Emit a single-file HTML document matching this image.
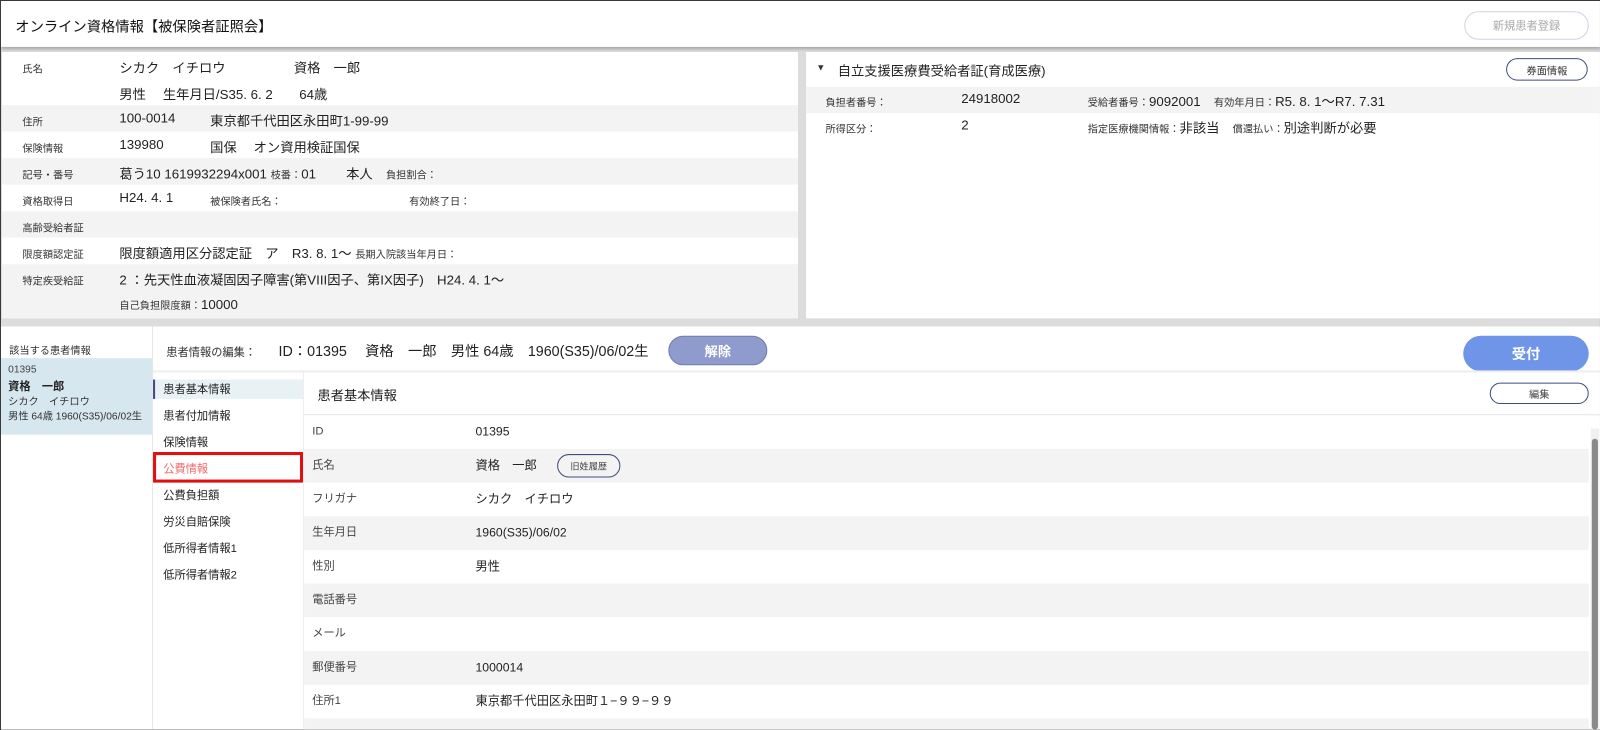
<!DOCTYPE html>
<html><head><meta charset="utf-8"><style>
*{box-sizing:border-box;margin:0;padding:0}
body{width:1600px;height:730px;overflow:hidden;background:#3a3a3a;font-family:"Liberation Sans","Noto Sans CJK JP",sans-serif;color:#222;position:relative}
.frame{position:absolute;left:1px;top:1px;width:1567px;height:714px;background:#dcdcdc;overflow:hidden;transform:scale(1.0204);transform-origin:0 0}
.a{position:absolute}
.hdr{left:0;top:0;width:1567px;height:45px;background:#fff;box-shadow:0 2px 3px rgba(0,0,0,.25)}
.lbl{font-size:10px;color:#333}
.v{font-size:13px;color:#222;white-space:nowrap}
.s{font-size:10px;color:#333;white-space:nowrap}
.row{position:absolute;left:0;width:100%}
.g{background:#f3f3f3}
.w{background:#fff}
.btn{position:absolute;border-radius:16px;font-size:11px;display:flex;align-items:center;justify-content:center}
</style></head><body>
<div class="frame">
 <div class="a hdr">
  <div class="a" style="left:14px;top:15px;font-size:14px;color:#111">オンライン資格情報【被保険者証照会】</div>
  <div class="btn" style="left:1434px;top:10px;width:122px;height:28px;border:1px solid #cfd3e4;color:#aaa">新規患者登録</div>
 </div>
 <div class="a" style="left:1px;top:50px;width:780px;height:261px;background:#fff">
  <div class="row w" style="top:0;height:52px"></div>
  <div class="row g" style="top:52px;height:26px"></div>
  <div class="row w" style="top:78px;height:26px"></div>
  <div class="row g" style="top:104px;height:26px"></div>
  <div class="row w" style="top:130px;height:26px"></div>
  <div class="row g" style="top:156px;height:26px"></div>
  <div class="row w" style="top:182px;height:26px"></div>
  <div class="row g" style="top:208px;height:53px"></div>
  <div class="a lbl" style="left:20px;top:8px">氏名</div>
  <div class="a v" style="left:115px;top:5px">シカク　イチロウ</div>
  <div class="a v" style="left:286px;top:5px">資格　一郎</div>
  <div class="a v" style="left:115px;top:31px">男性　 生年月日/S35. 6. 2　　64歳</div>
  <div class="a lbl" style="left:20px;top:60px">住所</div>
  <div class="a v" style="left:115px;top:57px">100-0014</div>
  <div class="a v" style="left:204px;top:57px">東京都千代田区永田町1-99-99</div>
  <div class="a lbl" style="left:20px;top:86px">保険情報</div>
  <div class="a v" style="left:115px;top:83px">139980</div>
  <div class="a v" style="left:204px;top:83px">国保　 オン資用検証国保</div>
  <div class="a lbl" style="left:20px;top:112px">記号・番号</div>
  <div class="a v" style="left:115px;top:109px">葛う10 1619932294x001 <span class="s">枝番：</span>01　　 本人　<span class="s">負担割合：</span></div>
  <div class="a lbl" style="left:20px;top:138px">資格取得日</div>
  <div class="a v" style="left:115px;top:135px">H24. 4. 1</div>
  <div class="a s" style="left:204px;top:138px">被保険者氏名：</div>
  <div class="a s" style="left:399px;top:138px">有効終了日：</div>
  <div class="a lbl" style="left:20px;top:164px">高齢受給者証</div>
  <div class="a lbl" style="left:20px;top:190px">限度額認定証</div>
  <div class="a v" style="left:115px;top:187px">限度額適用区分認定証　ア　R3. 8. 1～ <span class="s">長期入院該当年月日：</span></div>
  <div class="a lbl" style="left:20px;top:216px">特定疾受給証</div>
  <div class="a v" style="left:115px;top:213px">2 ：先天性血液凝固因子障害(第VIII因子、第IX因子)　H24. 4. 1～</div>
  <div class="a v" style="left:115px;top:240px"><span class="s">自己負担限度額：</span>10000</div>
 </div>
 <div class="a" style="left:789px;top:50px;width:778px;height:261px;background:#fff">
  <div class="a" style="left:10px;top:10px;font-size:9px;color:#333">▼</div>
  <div class="a v" style="left:31px;top:8px">自立支援医療費受給者証(育成医療)</div>
  <div class="btn" style="left:686px;top:6px;width:80px;height:22px;border:1.5px solid #3d4c80;font-size:10px;color:#333">券面情報</div>
  <div class="row g" style="top:34px;height:26px"></div>
  <div class="a s" style="left:19px;top:41px">負担者番号：</div>
  <div class="a v" style="left:152px;top:38px">24918002</div>
  <div class="a v" style="left:276px;top:38px"><span class="s">受給者番号：</span>9092001　<span class="s">有効年月日：</span>R5. 8. 1～R7. 7.31</div>
  <div class="a s" style="left:19px;top:67px">所得区分：</div>
  <div class="a v" style="left:152px;top:64px">2</div>
  <div class="a v" style="left:276px;top:64px"><span class="s">指定医療機関情報：</span>非該当　<span class="s">償還払い：</span>別途判断が必要</div>
 </div>
 <div class="a" style="left:0;top:319px;width:1567px;height:400px;background:#fff">
  <div class="a" style="left:148px;top:0;width:1px;height:400px;background:#e6e6e6"></div>
  <div class="a s" style="left:8px;top:15px">該当する患者情報</div>
  <div class="a" style="left:0;top:31px;width:148px;height:75px;background:#d7e7ef"></div>
  <div class="a s" style="left:7px;top:37px;color:#444">01395</div>
  <div class="a" style="left:7px;top:50px;font-size:11px;font-weight:bold">資格　一郎</div>
  <div class="a s" style="left:7px;top:65px">シカク　イチロウ</div>
  <div class="a s" style="left:7px;top:79px">男性 64歳 1960(S35)/06/02生</div>
  <div class="a s" style="left:162px;top:17px;font-size:11px">患者情報の編集：</div>
  <div class="a" style="left:272px;top:14px;font-size:14px;white-space:nowrap">ID：01395　 資格　一郎　男性 64歳　1960(S35)/06/02生</div>
  <div class="btn" style="left:654px;top:9px;width:97px;height:29px;background:#8e9bcc;border:1px solid #6f7db2;color:#fff;font-weight:bold;font-size:13px">解除</div>
  <div class="btn" style="left:1433px;top:9px;width:123px;height:35px;background:#6f95e8;border-radius:18px;color:#fff;font-weight:bold;font-size:14px">受付</div>
  <div class="a" style="left:149px;top:43px;width:1418px;height:2px;background:#eee"></div>
  <div class="a" style="left:149px;top:52px;width:147px;height:19px;background:#e8f1f4;border-left:2px solid #3d4c80"></div>
  <div class="a" style="font-size:11px;left:159px;top:49px;line-height:26px">患者基本情報<br>患者付加情報<br>保険情報<br><span style="color:#f06a6a">公費情報</span><br>公費負担額<br>労災自賠保険<br>低所得者情報1<br>低所得者情報2</div>
  <div class="a" style="left:149px;top:123px;width:147px;height:30px;border:3px solid #e01010"></div>
  <div class="a" style="left:296px;top:45px;width:1px;height:355px;background:#eee"></div>
  <div class="a" style="left:310px;top:57px;font-size:13px">患者基本情報</div>
  <div class="btn" style="left:1459px;top:55px;width:97px;height:21px;border:1.5px solid #3d4c80;font-size:10px;color:#444">編集</div>
  <div class="a" style="left:297px;top:86px;width:1270px;height:1px;background:#e3e3e3"></div>
  <div class="a" style="left:297px;top:87px;width:1259px;height:313px;font-size:13px">
   <div class="row w" style="top:0;height:33px"></div>
   <div class="row g" style="top:33px;height:33px"></div>
   <div class="row w" style="top:66px;height:33px"></div>
   <div class="row g" style="top:99px;height:33px"></div>
   <div class="row w" style="top:132px;height:33px"></div>
   <div class="row g" style="top:165px;height:33px"></div>
   <div class="row w" style="top:198px;height:33px"></div>
   <div class="row g" style="top:231px;height:33px"></div>
   <div class="row w" style="top:264px;height:33px"></div>
   <div class="row g" style="top:297px;height:33px"></div>
   <div class="a" style="left:8px;top:0;font-size:11px;line-height:33px;color:#444">ID<br>氏名<br>フリガナ<br>生年月日<br>性別<br>電話番号<br>メール<br>郵便番号<br>住所1</div>
   <div class="a" style="left:168px;top:0;font-size:12px;line-height:33px">01395<br>資格　一郎<br>シカク　イチロウ<br>1960(S35)/06/02<br>男性<br><br><br>1000014<br>東京都千代田区永田町１−９９−９９</div>
   <div class="btn" style="left:248px;top:38px;width:62px;height:23px;border:1.5px solid #3d4c80;font-size:9px;color:#444">旧姓履歴</div>
  </div>
  <div class="a" style="left:1558px;top:100px;width:8px;height:300px;background:#f0f0f0"></div>
  <div class="a" style="left:1559px;top:110px;width:6px;height:285px;background:#8a8a8a;border-radius:3px"></div>
 </div>
</div>
</body></html>
